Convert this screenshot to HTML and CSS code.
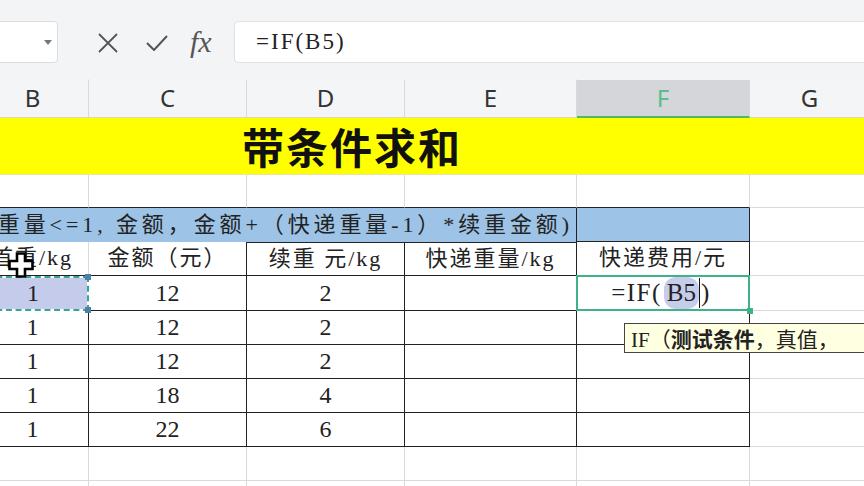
FILE: index.html
```html
<!DOCTYPE html>
<html>
<head>
<meta charset="utf-8">
<link rel="stylesheet" href="styles.css">
</head>
<body>
<div class="toolbar">
  <div class="namebox"><span class="caret"></span></div>
  <div class="tools">
    <svg class="ico-x" width="20" height="20" viewBox="0 0 20 20"><path d="M1 1 L19 19 M19 1 L1 19" stroke="#555" stroke-width="1.8" fill="none"/></svg>
    <svg class="ico-ok" width="22" height="16" viewBox="0 0 22 16"><path d="M1 8 L8 15 L21 1" stroke="#555" stroke-width="2" fill="none"/></svg>
    <span class="fx">fx</span>
  </div>
  <div class="formula">=IF(B5)</div>
</div>
<div class="sheet">
  <div class="grid">
    <div class="h">B</div><div class="h">C</div><div class="h">D</div><div class="h">E</div><div class="h sel">F</div><div class="h">G</div>

    <div class="title">带条件求和</div>

    <div class="kb"></div><div class="kb"></div><div class="kb"></div><div class="kb"></div><div class="kb"></div><div></div>

    <div class="note">重量&lt;=1, 金额，金额+（快递重量-1）*续重金额)</div><div class="blue k"></div><div></div>

    <div class="t kb">首重/kg</div><div class="t k">金额（元）</div><div class="t k kt">续重 元/kg</div><div class="t k kt">快递重量/kg</div><div class="t k">快递费用/元</div><div></div>

    <div class="n k ref">1</div><div class="n k">12</div><div class="n k">2</div><div class="n k"></div><div class="n k act"><span class="fm">=IF(</span><span class="rb">B5</span><span class="tc"></span><span class="fm">)</span></div><div></div>
    <div class="n k">1</div><div class="n k">12</div><div class="n k">2</div><div class="n k"></div><div class="n k"></div><div></div>
    <div class="n k">1</div><div class="n k">12</div><div class="n k">2</div><div class="n k"></div><div class="n k"></div><div></div>
    <div class="n k">1</div><div class="n k">18</div><div class="n k">4</div><div class="n k"></div><div class="n k"></div><div></div>
    <div class="n k">1</div><div class="n k">22</div><div class="n k">6</div><div class="n k"></div><div class="n k"></div><div></div>
    <div></div><div></div><div></div><div></div><div></div><div></div>
    <div></div><div></div><div></div><div></div><div></div><div></div>
  </div>
  <div class="tip">IF（<b>测试条件</b>，真值，</div>
  <svg class="cursor" width="26" height="26" viewBox="0 0 26 26"><path d="M9 1.5 H17 V9 H24.5 V17 H17 V24.5 H9 V17 H1.5 V9 H9 Z" fill="#fff" stroke="#000" stroke-width="2.6" stroke-linejoin="miter"/></svg>
</div>
</body>
</html>
```
FILE: styles.css
```css
body {
  margin: 0;
  width: 864px;
  height: 486px;
  overflow: hidden;
  background: #fff;
  font-family: "Liberation Serif", "Noto Sans CJK SC", serif;
  color: #222;
}

.toolbar {
  height: 79px;
  box-sizing: border-box;
  padding-top: 21px;
  background: #f3f4f6;
  display: flex;
  align-items: flex-start;
}

.namebox {
  width: 59px;
  height: 42px;
  margin-left: -1px;
  box-sizing: border-box;
  background: #fff;
  border: 1px solid #dcdde1;
  border-radius: 0 4px 4px 0;
  display: flex;
  align-items: center;
  justify-content: flex-end;
  padding-right: 5px;
}

.caret {
  width: 0;
  height: 0;
  border-left: 4px solid transparent;
  border-right: 4px solid transparent;
  border-top: 5px solid #777;
}

.tools {
  width: 176px;
  height: 42px;
  box-sizing: border-box;
  padding-left: 40px;
  display: flex;
  align-items: center;
}

.ico-x { margin-top: 1px; }
.ico-ok { margin-left: 28px; margin-top: 1px; }

.fx {
  margin-left: 22px;
  font-family: "Liberation Serif", serif;
  font-style: italic;
  font-size: 30px;
  color: #555;
  line-height: 1;
}

.formula {
  flex: 1;
  height: 42px;
  margin-right: -4px;
  box-sizing: border-box;
  background: #fff;
  border: 1px solid #dfe0e3;
  border-radius: 4px;
  padding-left: 21px;
  display: flex;
  align-items: center;
  font-family: "Liberation Serif", serif;
  font-size: 23px;
  letter-spacing: 2px;
  color: #222;
}

.sheet {
  position: relative;
  height: 407px;
  overflow: hidden;
}

.grid {
  display: grid;
  grid-template-columns: 112px 158px 158px 172px 173px 120px;
  grid-template-rows: 39px 57px 33px 34px 34px 35px 34px 34px 34px 34px 34px 40px;
  margin-left: -23px;
}

.grid > div {
  box-sizing: border-box;
  border-right: 1px solid #dadada;
  border-bottom: 1px solid #dadada;
  display: flex;
  align-items: center;
  justify-content: center;
  white-space: nowrap;
  overflow: hidden;
  line-height: 1.1;
}

.grid > .h {
  background: #f4f5f7;
  font-family: "Noto Sans", sans-serif;
  font-size: 24px;
  color: #333;
  border-right-color: #d8d9dc;
  border-bottom-color: #d9dab0;
  border-top: 1px solid #f4f5f7;
}

.grid > .h.sel {
  background: #d4d6d9;
  color: #5abd8b;
  border-bottom: 2px solid #4cbb5c;
}

.grid > .title {
  grid-column: 1 / span 6;
  background: #ffff00;
  border-right: none;
  border-bottom-color: #e6e6a0;
  justify-content: flex-start;
  padding-left: 265px;
  font-family: "Noto Sans CJK SC", sans-serif;
  font-weight: bold;
  font-size: 42px;
  letter-spacing: 2px;
  line-height: 1.3;
  overflow: visible;
  color: #111;
}

.grid > .kb { border-bottom-color: #222; }

.grid > .note {
  grid-column: 1 / span 4;
  background: #9dc3e6;
  border-right-color: #222;
  border-bottom: none;
  justify-content: flex-end;
  padding-right: 3px;
  font-size: 22px;
  letter-spacing: 3.9px;
}

.grid > .blue { background: #9dc3e6; }

.grid > .k {
  border-right-color: #222;
  border-bottom-color: #222;
}

.grid > .kt { border-top: 1px solid #222; }

.grid > .t {
  font-size: 22px;
  letter-spacing: 2px;
  color: #222;
}

.grid > .t.kb {
  justify-content: flex-end;
  padding-right: 15px;
}

.grid > .n {
  font-size: 24px;
  color: #222;
}

.grid > .ref {
  background: #c5cbea;
  background-clip: padding-box;
  border: 2px dashed #3aa58f;
  overflow: visible;
  position: relative;
}

.grid > .ref::before,
.grid > .ref::after {
  content: "";
  position: absolute;
  right: -4px;
  width: 6px;
  height: 6px;
  background: #4e7fa5;
}

.grid > .ref::before { top: -4px; }
.grid > .ref::after { bottom: -4px; }

.grid > .act {
  position: relative;
  overflow: visible;
  font-size: 25px;
  padding-right: 4px;
}

.grid > .act::after {
  content: "";
  position: absolute;
  left: -1px;
  top: -1px;
  right: -1px;
  bottom: -1px;
  border: 2px solid #3fb385;
}

.grid > .act::before {
  content: "";
  position: absolute;
  right: -4px;
  bottom: -4px;
  width: 6px;
  height: 6px;
  background: #3fb385;
  z-index: 2;
}

.fm {
  letter-spacing: 1.5px;
}

.rb {
  background: #c5cdea;
  border-radius: 12px;
  padding: 2px 3px;
  margin-left: 2px;
}

.tc {
  display: inline-block;
  width: 1px;
  height: 30px;
  background: #111;
  margin-right: 1px;
}

.tip {
  position: absolute;
  left: 624px;
  top: 244px;
  width: 260px;
  height: 30px;
  box-sizing: border-box;
  background: #ffffe1;
  border: 1px solid #444;
  padding-left: 6px;
  font-size: 21px;
  line-height: 28px;
  white-space: nowrap;
  color: #222;
}

.tip b {
  font-family: "Noto Sans CJK SC", sans-serif;
  font-weight: bold;
}

.cursor {
  position: absolute;
  left: 8px;
  top: 173px;
}
```
